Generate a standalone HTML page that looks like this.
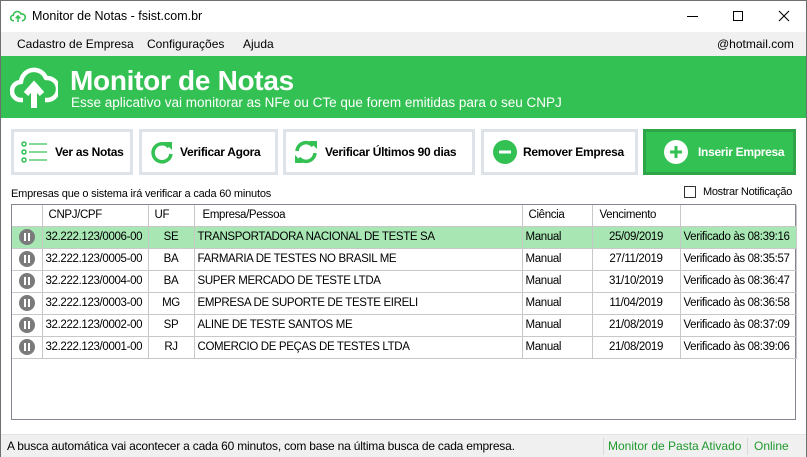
<!DOCTYPE html>
<html><head><meta charset="utf-8"><style>
*{box-sizing:border-box;margin:0;padding:0}
body{width:807px;height:457px;overflow:hidden;background:#fff;font-family:"Liberation Sans","DejaVu Sans",sans-serif;position:relative}
.win{position:absolute;left:0;top:0;width:807px;height:457px;border:1px solid #6f6f6f;background:#fff}
.abs{position:absolute}
.title{left:0;top:0;width:805px;height:31px;background:#fff}
.menu{left:0;top:31px;width:805px;height:24px;background:#f0f0f0;font-size:12px;color:#000}
.menu span{position:absolute;top:5px}
.banner{left:0;top:55px;width:805px;height:62px;background:#34c153;color:#fff}
.btn{top:128px;height:46px;border:3px solid #dde3e9;background:#fff;font-weight:bold;font-size:12px;letter-spacing:-0.3px;white-space:nowrap;display:flex;align-items:center;color:#000}
.btn svg{margin-right:6px;flex:none}
table{border-collapse:collapse;font-size:11.5px;letter-spacing:-0.35px;table-layout:fixed}
td,th{height:22px;border-right:1px solid #c8c8c8;border-bottom:1px solid #c8c8c8;padding:0 3px;white-space:nowrap;overflow:hidden;font-weight:normal;text-align:left}
th{height:21px}
tr.sel td{background:#a8e7b4}
.c{text-align:center}
.pz{display:inline-block;width:16px;height:16px;border-radius:50%;background:#7a7a7a;position:relative;vertical-align:middle}
.pz:before,.pz:after{content:"";position:absolute;top:4px;width:2px;height:8px;background:#fff}
.pz:before{left:5px}.pz:after{left:9px}
.status{left:0;top:433px;width:805px;height:23px;background:#f0f0f0;font-size:12px;border-top:1px solid #e3e3e3}
</style></head><body><div class="win">
<div class="abs title">
<svg class="abs" style="left:9px;top:8px" width="16" height="14" viewBox="0 0 24 20"><path d="M6 17H5a4 4 0 0 1 0-8 6 6 0 0 1 11.5-2A4.5 4.5 0 0 1 19 17h-1" fill="none" stroke="#34c153" stroke-width="2.4"/><path d="M12 19V10M8.5 13.5 12 10l3.5 3.5" fill="none" stroke="#34c153" stroke-width="2.4"/></svg>
<span class="abs" style="left:31px;top:8px;font-size:12.5px">Monitor de Notas - fsist.com.br</span>
<div class="abs" style="left:686px;top:15px;width:11px;height:1px;background:#000"></div>
<div class="abs" style="left:732px;top:10px;width:10px;height:10px;border:1px solid #000"></div>
<svg class="abs" style="left:777px;top:9px" width="12" height="12"><path d="M1 1L11 11M11 1L1 11" stroke="#000" stroke-width="1.1"/></svg>
</div>
<div class="abs menu"><span style="left:16px">Cadastro de Empresa</span><span style="left:146px">Configurações</span><span style="left:242px">Ajuda</span><span style="left:716px">@hotmail.com</span></div>
<div class="abs banner">
<svg class="abs" style="left:9px;top:8px" width="48" height="46" viewBox="0 0 48 46"><path d="M13 36H11A9 9 0 0 1 11 18 13 13 0 0 1 36 14 10 10 0 0 1 38 36H35" fill="none" stroke="#fff" stroke-width="4.5" stroke-linejoin="round"/><path d="M24 44V22M16 30 24 21 32 30" fill="none" stroke="#fff" stroke-width="6"/></svg>
<div class="abs" style="left:69px;top:9px;font-size:28px;font-weight:bold;letter-spacing:-0.3px">Monitor de Notas</div>
<div class="abs" style="left:70px;top:39px;font-size:13.5px">Esse aplicativo vai monitorar as NFe ou CTe que forem emitidas para o seu CNPJ</div>
</div>
<div class="abs btn" style="left:10px;width:122px;padding-left:7px">
<svg width="28" height="24" viewBox="0 0 28 24"><g fill="none" stroke="#34c153" stroke-width="1.5"><circle cx="3" cy="4" r="2"/><circle cx="3" cy="12" r="2"/><circle cx="3" cy="20" r="2"/></g><g stroke="#34c153" stroke-width="2"><path d="M8 4H26M8 12H26M8 20H26" opacity=".6"/></g></svg>Ver as Notas</div>
<div class="abs btn" style="left:138px;width:139px;padding-left:8px">
<svg width="24" height="24" viewBox="0 0 24 24"><path d="M19 7A9 9 0 1 0 21 14" fill="none" stroke="#34c153" stroke-width="3.5"/><path d="M14 2H22V10Z" fill="#34c153"/></svg>Verificar Agora</div>
<div class="abs btn" style="left:282px;width:192px;padding-left:7px">
<svg width="26" height="26" viewBox="0 0 26 26"><path d="M4 12A9 9 0 0 1 20 7" fill="none" stroke="#34c153" stroke-width="3.5"/><path d="M16 2H24V10Z" fill="#34c153"/><path d="M22 14A9 9 0 0 1 6 19" fill="none" stroke="#34c153" stroke-width="3.5"/><path d="M10 24H2V16Z" fill="#34c153"/></svg>Verificar Últimos 90 dias</div>
<div class="abs btn" style="left:480px;width:157px;padding-left:9px">
<svg width="24" height="24"><circle cx="12" cy="12" r="12" fill="#34c153"/><rect x="6" y="10.5" width="12" height="3" fill="#fff"/></svg>Remover Empresa</div>
<div class="abs btn" style="left:642px;width:153px;padding-left:18px;background:#34c153;border-color:#2ea547;color:#fff">
<svg width="24" height="24" style="margin-right:10px"><circle cx="12" cy="12" r="12" fill="#fff"/><rect x="6" y="10.5" width="12" height="3" fill="#34c153"/><rect x="10.5" y="6" width="3" height="12" fill="#34c153"/></svg>Inserir Empresa</div>
<div class="abs" style="left:10px;top:187px;font-size:11px;letter-spacing:-0.2px">Empresas que o sistema irá verificar a cada 60 minutos</div>
<div class="abs" style="left:683px;top:185px;width:12px;height:12px;border:1px solid #333"></div>
<div class="abs" style="left:702px;top:185px;font-size:11px;letter-spacing:-0.3px">Mostrar Notificação</div>
<div class="abs" style="left:10px;top:203px;width:785px;height:216px;border:1px solid #828790;background:#fff">
<table style="width:784px">
<colgroup><col style="width:30px"><col style="width:106px"><col style="width:46px"><col style="width:328px"><col style="width:70px"><col style="width:88px"><col style="width:116px"></colgroup>
<tr><th></th><th style="padding-left:6px">CNPJ/CPF</th><th style="padding-left:6px">UF</th><th style="padding-left:8px">Empresa/Pessoa</th><th style="padding-left:6px">Ciência</th><th style="padding-left:7px">Vencimento</th><th></th></tr>
<tr class="sel"><td class="c"><span class="pz"></span></td><td>32.222.123/0006-00</td><td class="c">SE</td><td>TRANSPORTADORA NACIONAL DE TESTE SA</td><td>Manual</td><td class="c">25/09/2019</td><td>Verificado às 08:39:16</td></tr>
<tr><td class="c"><span class="pz"></span></td><td>32.222.123/0005-00</td><td class="c">BA</td><td>FARMARIA DE TESTES NO BRASIL ME</td><td>Manual</td><td class="c">27/11/2019</td><td>Verificado às 08:35:57</td></tr>
<tr><td class="c"><span class="pz"></span></td><td>32.222.123/0004-00</td><td class="c">BA</td><td>SUPER MERCADO DE TESTE LTDA</td><td>Manual</td><td class="c">31/10/2019</td><td>Verificado às 08:36:47</td></tr>
<tr><td class="c"><span class="pz"></span></td><td>32.222.123/0003-00</td><td class="c">MG</td><td>EMPRESA DE SUPORTE DE TESTE EIRELI</td><td>Manual</td><td class="c">11/04/2019</td><td>Verificado às 08:36:58</td></tr>
<tr><td class="c"><span class="pz"></span></td><td>32.222.123/0002-00</td><td class="c">SP</td><td>ALINE DE TESTE SANTOS ME</td><td>Manual</td><td class="c">21/08/2019</td><td>Verificado às 08:37:09</td></tr>
<tr><td class="c"><span class="pz"></span></td><td>32.222.123/0001-00</td><td class="c">RJ</td><td>COMERCIO DE PEÇAS DE TESTES LTDA</td><td>Manual</td><td class="c">21/08/2019</td><td>Verificado às 08:39:06</td></tr>
</table></div>
<div class="abs status">
<span class="abs" style="left:6px;top:4px;letter-spacing:-0.2px">A busca automática vai acontecer a cada 60 minutos, com base na última busca de cada empresa.</span>
<div class="abs" style="left:602px;top:3px;width:1px;height:17px;background:#d8d8d8"></div>
<span class="abs" style="left:607px;top:4px;color:#1f9a2e">Monitor de Pasta Ativado</span>
<div class="abs" style="left:746px;top:3px;width:1px;height:17px;background:#d8d8d8"></div>
<span class="abs" style="left:753px;top:4px;color:#1f9a2e">Online</span>
</div>
</div></body></html>
